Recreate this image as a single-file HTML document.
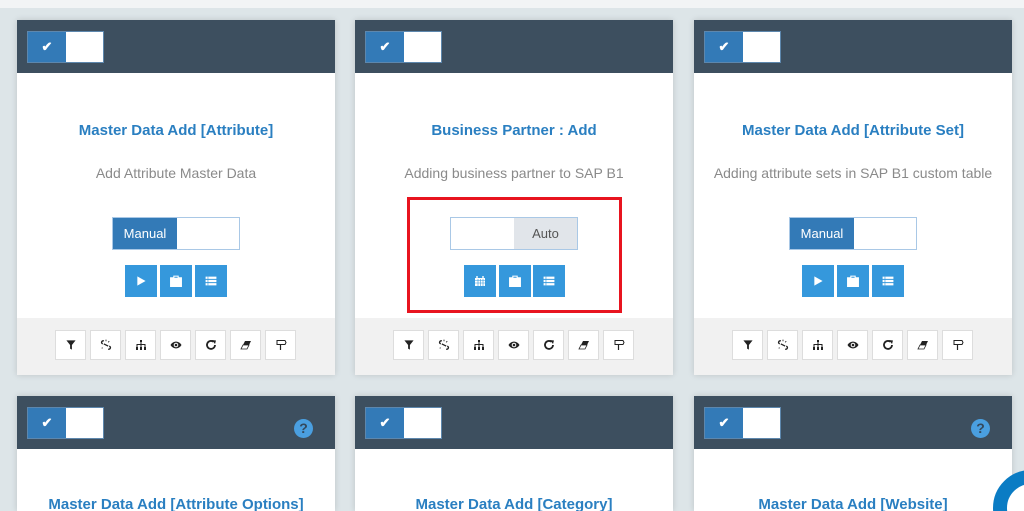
<!DOCTYPE html>
<html><head><style>
*{margin:0;padding:0;box-sizing:border-box}
html,body{width:1024px;height:511px;overflow:hidden}
body{background:#dde5e8;font-family:"Liberation Sans",sans-serif;position:relative}
.top{position:absolute;left:0;top:0;width:1024px;height:8px;background:#f2f4f5}
.card{position:absolute;width:318px;background:#fff;box-shadow:0 0 6px rgba(0,0,0,.15);overflow:hidden}
.hd{position:absolute;left:0;top:0;width:318px;height:53px;background:#3d4f5f}
.tg{position:absolute;left:10px;top:11px;width:77px;height:32px;background:#fff;border:1px solid #5d87ad}
.tg b{position:absolute;left:0;top:0;width:38px;height:30px;background:#337ab7;color:#fff;font-size:13px;text-align:center;line-height:30px}
.q{position:absolute;right:22px;top:23px;width:19px;height:19px;border-radius:50%;background:#4a9fe0;color:#34495e;font-weight:bold;font-size:14px;text-align:center;line-height:19px}
.t{position:absolute;left:0;width:318px;top:102px;text-align:center;color:#2a7fc1;font-weight:bold;font-size:15px}
.s{position:absolute;left:0;width:318px;top:145px;text-align:center;color:#8a8a8a;font-size:14px}
.mt{position:absolute;left:95px;top:197px;width:128px;height:33px;border:1px solid #a9c8e6;background:#fff}
.mt .m{position:absolute;left:0;top:0;width:64px;height:31px;background:#337ab7;color:#fff;font-size:13px;text-align:center;line-height:31px}
.mt .a{position:absolute;right:0;top:0;width:63px;height:31px;background:#e1e5ea;color:#555;font-size:13px;text-align:center;line-height:31px}
.bt{position:absolute;top:245px;width:32px;height:32px;background:#3598dc}
.bt svg,.ib svg{position:absolute;left:50%;top:50%;transform:translate(-50%,-50%)}
.ft{position:absolute;left:0;top:298px;width:318px;height:57px;background:#f1f1f1}
.ib{position:absolute;top:12px;width:31px;height:30px;background:#fff;border:1px solid #ddd}
</style></head><body>
<div class="top"></div>
<svg width="0" height="0" style="position:absolute">
<defs>
<symbol id="play" viewBox="0 0 12 12"><path d="M2 1L11 6L2 11Z" fill="#fff"/></symbol>
<symbol id="brief" viewBox="0 0 12 12"><path d="M4 3V1.5H8V3M1 3H11V11H1Z" fill="#fff" stroke="#fff" stroke-width="1"/><path d="M4.5 3V2H7.5V3" fill="#3598dc"/></symbol>
<symbol id="list" viewBox="0 0 12 12"><path d="M1 2H11V4H1ZM1 5H11V7H1ZM1 8H11V10H1Z" fill="#fff"/><path d="M3.2 2V10" stroke="#3598dc" stroke-width=".6"/></symbol>
<symbol id="cal" viewBox="0 0 12 12"><path d="M1 3H11V11H1Z" fill="#fff"/><path d="M3 1V3M9 1V3" stroke="#fff" stroke-width="1.4"/><path d="M1 5.5H11M1 8H11M4 4V11M6.5 4V11M9 4V11" stroke="#3598dc" stroke-width=".6"/></symbol>
<symbol id="filt" viewBox="0 0 12 12"><path d="M1 1H11L7 6V11L5 10V6Z" fill="#222"/></symbol>
<symbol id="link" viewBox="0 0 12 12"><path d="M4 2C2 2 1 4 3 5M8 10C10 10 11 8 9 7M4 5L8 7" stroke="#222" stroke-width="1.2" fill="none"/><path d="M6 1V2.5M9 2.5L8 3.5M2 9L3 8.5" stroke="#222" stroke-width=".8"/></symbol>
<symbol id="tree" viewBox="0 0 12 12"><path d="M5 1H7V3H5ZM1 8H3V11H1ZM5 8H7V11H5ZM9 8H11V11H9Z" fill="#222"/><path d="M6 3V8M2 8V5.5H10V8" stroke="#222" stroke-width="1" fill="none"/></symbol>
<symbol id="eye" viewBox="0 0 12 12"><path d="M0.5 6C3 1.5 9 1.5 11.5 6C9 10.5 3 10.5 0.5 6Z" fill="#222"/><circle cx="6" cy="6" r="2.3" fill="#fff"/><circle cx="6" cy="6" r="1.3" fill="#222"/></symbol>
<symbol id="ref" viewBox="0 0 12 12"><path d="M10 6A4 4 0 1 1 8.5 2.8" stroke="#222" stroke-width="1.8" fill="none"/><path d="M7 1L11 1.5L10 5Z" fill="#222"/></symbol>
<symbol id="eras" viewBox="0 0 12 12"><path d="M5 2H11L7 10H1Z" fill="#222"/><path d="M3 6H9L7 10H1Z" fill="#fff" stroke="#222" stroke-width=".8"/></symbol>
<symbol id="sign" viewBox="0 0 12 12"><path d="M2 1.5H10L11 3.5L10 5.5H2Z" fill="none" stroke="#222" stroke-width="1"/><path d="M5.5 5.5V11" stroke="#222" stroke-width="1.2"/></symbol>
</defs></svg>

<div class="card" style="left:17px;top:20px;height:355px">
<div class="hd"><div class="tg"><b>✔</b></div></div>
<div class="t">Master Data Add [Attribute]</div>
<div class="s">Add Attribute Master Data</div>
<div class="mt"><div class="m">Manual</div></div>
<div class="bt" style="left:108px"><svg width="11" height="12"><use href="#play"/></svg></div><div class="bt" style="left:143px"><svg width="13" height="13"><use href="#brief"/></svg></div><div class="bt" style="left:178px"><svg width="13" height="13"><use href="#list"/></svg></div>
<div class="ft">
<div class="ib" style="left:38px"><svg width="11" height="11"><use href="#filt"/></svg></div><div class="ib" style="left:73px"><svg width="13" height="13"><use href="#link"/></svg></div><div class="ib" style="left:108px"><svg width="12" height="12"><use href="#tree"/></svg></div><div class="ib" style="left:143px"><svg width="13" height="12"><use href="#eye"/></svg></div><div class="ib" style="left:178px"><svg width="12" height="12"><use href="#ref"/></svg></div><div class="ib" style="left:213px"><svg width="13" height="12"><use href="#eras"/></svg></div><div class="ib" style="left:248px"><svg width="12" height="12"><use href="#sign"/></svg></div>
</div></div>

<div class="card" style="left:355px;top:20px;height:355px">
<div class="hd"><div class="tg"><b>✔</b></div></div>
<div class="t">Business Partner : Add</div>
<div class="s">Adding business partner to SAP B1</div>
<div class="mt" style="background:#fff"><div class="a">Auto</div></div>
<div class="bt" style="left:109px"><svg width="12" height="13"><use href="#cal"/></svg></div><div class="bt" style="left:144px"><svg width="13" height="13"><use href="#brief"/></svg></div><div class="bt" style="left:178px"><svg width="13" height="13"><use href="#list"/></svg></div>
<div style="position:absolute;left:52px;top:177px;width:215px;height:116px;border:3px solid #e8141f"></div>
<div class="ft">
<div class="ib" style="left:38px"><svg width="11" height="11"><use href="#filt"/></svg></div><div class="ib" style="left:73px"><svg width="13" height="13"><use href="#link"/></svg></div><div class="ib" style="left:108px"><svg width="12" height="12"><use href="#tree"/></svg></div><div class="ib" style="left:143px"><svg width="13" height="12"><use href="#eye"/></svg></div><div class="ib" style="left:178px"><svg width="12" height="12"><use href="#ref"/></svg></div><div class="ib" style="left:213px"><svg width="13" height="12"><use href="#eras"/></svg></div><div class="ib" style="left:248px"><svg width="12" height="12"><use href="#sign"/></svg></div>
</div></div>

<div class="card" style="left:694px;top:20px;height:355px">
<div class="hd"><div class="tg"><b>✔</b></div></div>
<div class="t">Master Data Add [Attribute Set]</div>
<div class="s">Adding attribute sets in SAP B1 custom table</div>
<div class="mt"><div class="m">Manual</div></div>
<div class="bt" style="left:108px"><svg width="11" height="12"><use href="#play"/></svg></div><div class="bt" style="left:143px"><svg width="13" height="13"><use href="#brief"/></svg></div><div class="bt" style="left:178px"><svg width="13" height="13"><use href="#list"/></svg></div>
<div class="ft">
<div class="ib" style="left:38px"><svg width="11" height="11"><use href="#filt"/></svg></div><div class="ib" style="left:73px"><svg width="13" height="13"><use href="#link"/></svg></div><div class="ib" style="left:108px"><svg width="12" height="12"><use href="#tree"/></svg></div><div class="ib" style="left:143px"><svg width="13" height="12"><use href="#eye"/></svg></div><div class="ib" style="left:178px"><svg width="12" height="12"><use href="#ref"/></svg></div><div class="ib" style="left:213px"><svg width="13" height="12"><use href="#eras"/></svg></div><div class="ib" style="left:248px"><svg width="12" height="12"><use href="#sign"/></svg></div>
</div></div>

<div class="card" style="left:17px;top:396px;height:115px">
<div class="hd"><div class="tg"><b>✔</b></div><div class="q">?</div></div>
<div class="t" style="top:100px">Master Data Add [Attribute Options]</div></div>
<div class="card" style="left:355px;top:396px;height:115px">
<div class="hd"><div class="tg"><b>✔</b></div></div>
<div class="t" style="top:100px">Master Data Add [Category]</div></div>
<div class="card" style="left:694px;top:396px;height:115px">
<div class="hd"><div class="tg"><b>✔</b></div><div class="q">?</div></div>
<div class="t" style="top:100px">Master Data Add [Website]</div></div>

<div style="position:absolute;left:993px;top:470px;width:41px;height:41px;overflow:hidden"><div style="width:76px;height:76px;border-radius:50%;border:14px solid #0a7cc4;background:#fff"></div></div>
</body></html>
